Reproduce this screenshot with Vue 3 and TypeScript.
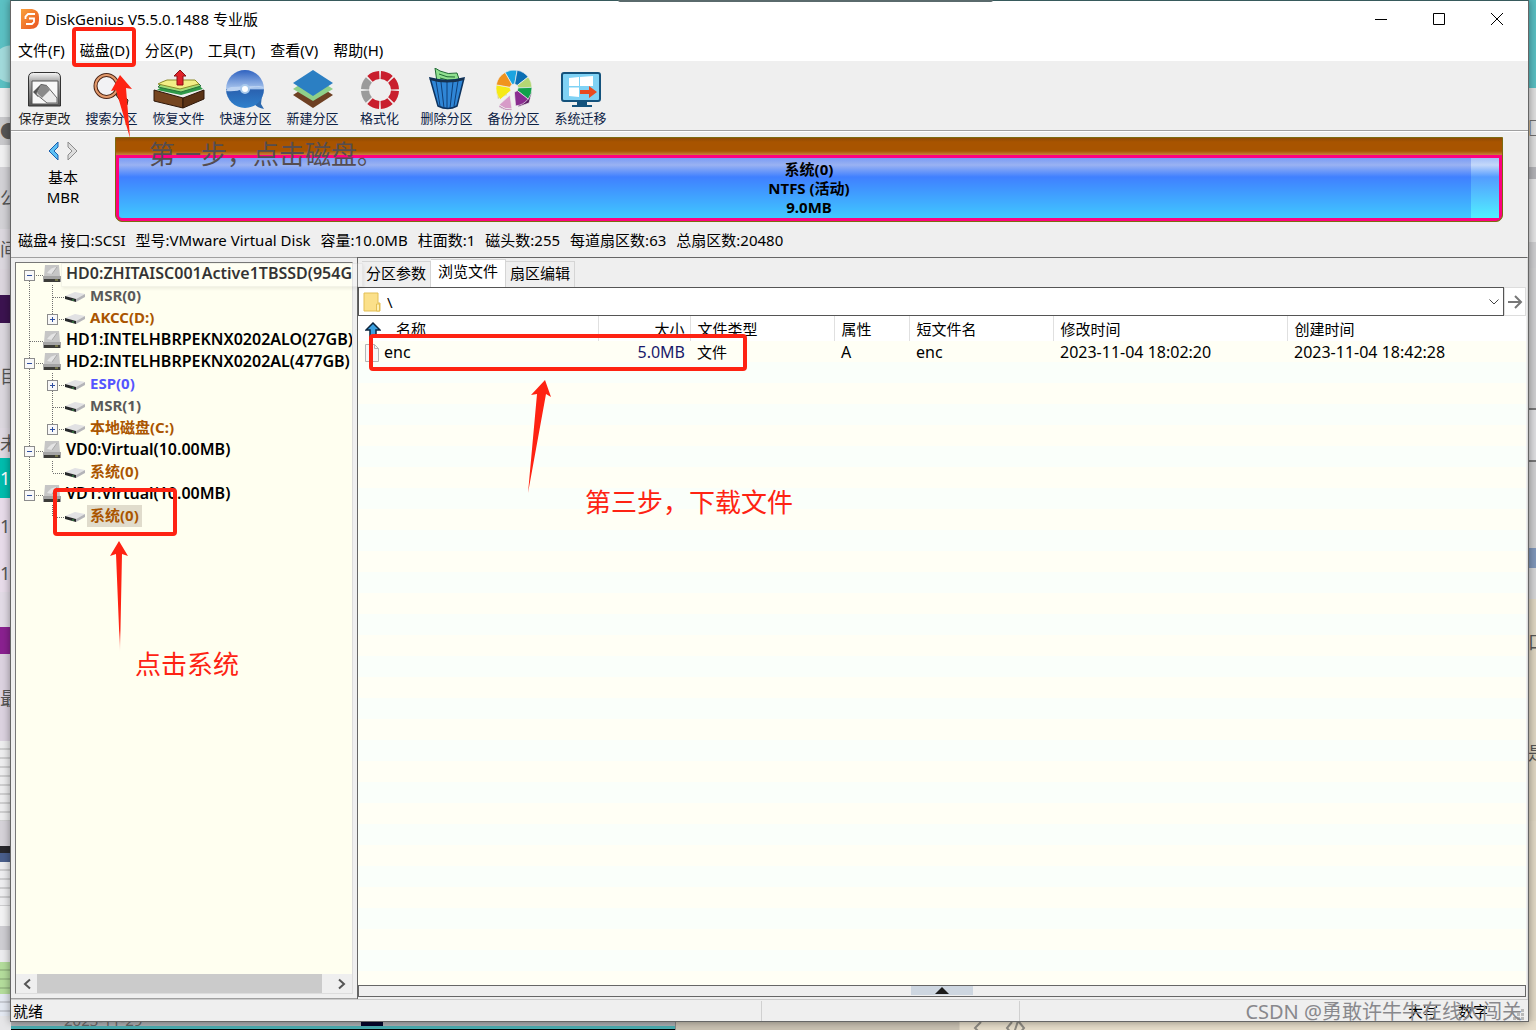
<script setup lang="ts">
import { ref } from 'vue'

interface TreeRow {
  label: string
  level: 0 | 1
  tone: 'disk' | 'grey' | 'brown' | 'blue'
  box?: 'plus' | 'minus'
  trunk: boolean
  lastChild?: boolean
  firstDisk?: boolean
  selected?: boolean
}

const menus = ['文件(F)', '磁盘(D)', '分区(P)', '工具(T)', '查看(V)', '帮助(H)']
const tools = ['保存更改', '搜索分区', '恢复文件', '快速分区', '新建分区', '格式化', '删除分区', '备份分区', '系统迁移']
const facts = ['磁盘4 接口:SCSI', '型号:VMware Virtual Disk', '容量:10.0MB', '柱面数:1', '磁头数:255', '每道扇区数:63', '总扇区数:20480']
const tabs = ['分区参数', '浏览文件', '扇区编辑']
const activeTab = ref('浏览文件')
const path = ref('\\')

const tree: TreeRow[] = [
  { label: 'HD0:ZHITAISC001Active1TBSSD(954GB)', level: 0, tone: 'disk', box: 'minus', trunk: true, firstDisk: true },
  { label: 'MSR(0)', level: 1, tone: 'grey', trunk: true },
  { label: 'AKCC(D:)', level: 1, tone: 'brown', box: 'plus', trunk: true, lastChild: true },
  { label: 'HD1:INTELHBRPEKNX0202ALO(27GB)', level: 0, tone: 'disk', trunk: true },
  { label: 'HD2:INTELHBRPEKNX0202AL(477GB)', level: 0, tone: 'disk', box: 'minus', trunk: true },
  { label: 'ESP(0)', level: 1, tone: 'blue', box: 'plus', trunk: true },
  { label: 'MSR(1)', level: 1, tone: 'grey', trunk: true },
  { label: '本地磁盘(C:)', level: 1, tone: 'brown', box: 'plus', trunk: true, lastChild: true },
  { label: 'VD0:Virtual(10.00MB)', level: 0, tone: 'disk', box: 'minus', trunk: true },
  { label: '系统(0)', level: 1, tone: 'brown', trunk: true, lastChild: true },
  { label: 'VD1:Virtual(10.00MB)', level: 0, tone: 'disk', box: 'minus', trunk: false },
  { label: '系统(0)', level: 1, tone: 'brown', trunk: false, lastChild: true, selected: true },
]

// Slices of the pages showing behind the window
const leftSlices = [
  { h: 88, c: '#5cc1c4', bubble: true }, { h: 29, c: '#efeff0' }, { h: 28, c: '#c9c9cc', t: '●' }, { h: 22, c: '#f1f1f2' },
  { h: 62, c: '#d3d2d6', t: '公' }, { h: 40, c: '#dcd8df', t: '间' }, { h: 26, c: '#dcd6de' }, { h: 28, c: '#3c1350' },
  { h: 105, c: '#dcd8df', t: '目' }, { h: 30, c: '#dfd9e2', t: '未' }, { h: 40, c: '#00bdae', t: '1', light: true },
  { h: 56, c: '#e8dcea', t: '1' }, { h: 38, c: '#e8dcea', t: '1' }, { h: 35, c: '#e2dbe6' }, { h: 27, c: '#8a2190' },
  { h: 87, c: '#dcd3e0', t: '最' }, { h: 80, c: '#eeeeef', lines: true }, { h: 25, c: '#d6d3d9' }, { h: 7, c: '#28282c' },
  { h: 9, c: '#4a5f8c' }, { h: 44, c: '#eeeef0', lines: true }, { h: 20, c: '#f3f3f4' }, { h: 24, c: '#cfced3' },
  { h: 12, c: '#ededef' }, { h: 32, c: '#b4dd9c', lines: true }, { h: 22, c: '#e4e9f2', lines: true }, { h: 14, c: '#e6e6e8' },
]
const rightSlices = [
  { h: 88, c: '#58bcc0' }, { h: 79, c: '#dedede', t: '□' }, { h: 12, c: '#b2b2b6' }, { h: 63, c: '#e3e3e4' },
  { h: 26, c: '#cdcdcf' }, { h: 140, c: '#cfcfd0' }, { h: 2, c: '#777' }, { h: 50, c: '#dedee0' },
  { h: 2, c: '#777' }, { h: 86, c: '#cfcfd0' }, { h: 20, c: '#7e95b8' }, { h: 31, c: '#d4d4d5' },
  { h: 86, c: '#ded5c1', t: '口' }, { h: 136, c: '#ded5c1', t: '是' }, { h: 209, c: '#e0d7c4' },
]

function wedge(a0: number, a1: number, r0: number, r1: number): string {
  const p = (a: number, r: number) => {
    const t = (a * Math.PI) / 180
    return `${(Math.cos(t) * r).toFixed(2)} ${(Math.sin(t) * r).toFixed(2)}`
  }
  return `M${p(a0, r0)}L${p(a0, r1)}A${r1} ${r1} 0 0 1 ${p(a1, r1)}L${p(a1, r0)}A${r0} ${r0} 0 0 0 ${p(a0, r0)}Z`
}
const wheel = [
  { a: -120, b: -80, c: '#1ba4e0' }, { a: -80, b: -38, c: '#0b6fb4' }, { a: -38, b: -2, c: '#b4d774' },
  { a: -2, b: 38, c: '#12a14b' }, { a: 38, b: 85, c: '#8a2c90' }, { a: 140, b: 190, c: '#f6ea16' }, { a: 190, b: 240, c: '#f0931e' },
]
</script>

<template>
  <div class="screen">
    <div class="desktop" aria-hidden="true">
      <div class="strip left">
        <div v-for="(s, i) in leftSlices" :key="i" :class="{ lines: s.lines, light: s.light, bubble: s.bubble }" :style="{ flexBasis: s.h + 'px', backgroundColor: s.c }">{{ s.t }}</div>
      </div>
      <div class="strip right">
        <div v-for="(s, i) in rightSlices" :key="i" :style="{ flexBasis: s.h + 'px', backgroundColor: s.c }">{{ s.t }}</div>
      </div>
      <div class="floor">
        <div class="floor-teal"><span>2023-11-29</span><i></i></div>
        <div class="floor-beige">
          <svg width="60" height="12" viewBox="0 0 60 12" fill="none" stroke="#8d8a82" stroke-width="2"><path d="M9 1 3 7l6 6M40 1l-5 6 5 6M47 1l5 6-5 6M46 0l-4 12" /></svg>
        </div>
      </div>
    </div>

    <main class="window">
      <header class="titlebar">
        <svg class="logo" width="18" height="20" viewBox="0 0 18 20">
          <defs><linearGradient id="lg" x1="0" y1="0" x2="1" y2="1"><stop offset="0" stop-color="#f9a13c" /><stop offset="1" stop-color="#e9501f" /></linearGradient></defs>
          <path d="M0 0h11q7 1 7 8v3q0 9-9 9H0z" fill="url(#lg)" />
          <path d="M14 5H7L4.500 7.500V10M8 9.500h5V13l-2 2H5" fill="none" stroke="#fff" stroke-width="1.800" />
        </svg>
        <h1>DiskGenius V5.5.0.1488 专业版</h1>
        <div class="controls">
          <button aria-label="最小化"><svg width="14" height="14"><path d="M1 7.500h12" /></svg></button>
          <button aria-label="最大化"><svg width="14" height="14"><path d="M1.500 1.500h11v11h-11z" /></svg></button>
          <button aria-label="关闭"><svg width="14" height="14"><path d="M1 1l12 12M13 1 1 13" /></svg></button>
        </div>
      </header>

      <nav class="menubar">
        <button v-for="m in menus" :key="m">{{ m }}</button>
      </nav>

      <div class="toolbar">
        <button v-for="(t, i) in tools" :key="t">
          <svg width="52" height="42" viewBox="0 0 52 42">
            <g v-if="i === 0">
              <defs><linearGradient id="sv" x1="0" y1="0" x2="0" y2="1"><stop offset="0" stop-color="#fafafa" /><stop offset=".25" stop-color="#aaa" /><stop offset="1" stop-color="#555" /></linearGradient></defs>
              <path d="M9.500 38V10q0-5.500 5-5.500h22q5 0 5 5.500v28z" fill="url(#sv)" stroke="#333" />
              <path d="M13 13h26v23H13z" fill="#f8f8f8" stroke="#555" />
              <path d="M14 24l8-8 6 1-9 12z" fill="#555" /><path d="M22 17l6 1 10 12v5H28L17 26z" fill="#ececec" stroke="#666" /><path d="M22 17l6 1 3 4-8 8-5-5z" fill="#8a8a8a" />
            </g>
            <g v-else-if="i === 1">
              <circle cx="20.500" cy="18" r="11" fill="#f2f2f4" stroke="#4b2415" stroke-width="4" />
              <circle cx="20.500" cy="18" r="11" fill="none" stroke="#e39a6c" stroke-width="2" />
              <path d="M30 27l4-3 8 8-1 5-3 1z" fill="#a9684a" stroke="#4b2415" />
              <path d="M32 30l5-3M35 33l5-3" stroke="#4b2415" />
            </g>
            <g v-else-if="i === 2">
              <path d="M1 22l29 8v10L1 33z" fill="#75451f" stroke="#2d1709" /><path d="M30 30l21-8v9l-21 9z" fill="#5a3316" stroke="#2d1709" />
              <path d="M7 20l6-4h31l6 5-22 6-24-5z" fill="#2f9a48" /><path d="M7 17l5-3h32l4 4-20 6-23-5z" fill="#9fdc77" stroke="#26733a" />
              <path d="M9 14l5-2h28l4 4-19 5-22-5z" fill="#f2ef86" stroke="#8d8b2a" />
              <path d="M27 2l6 6h-3v9h-6V8h-3z" fill="#e0222a" stroke="#8a1015" />
            </g>
            <g v-else-if="i === 3">
              <defs><linearGradient id="cd" x1="0" y1="0" x2="0" y2="1"><stop offset="0" stop-color="#2f62c0" /><stop offset=".5" stop-color="#a9c6ee" /><stop offset=".52" stop-color="#2a62b0" /><stop offset="1" stop-color="#2f80cc" /></linearGradient></defs>
              <path d="M32 33l10-6-1 9 3 5q-8-1-12-8z" fill="#2c69ae" /><circle cx="25" cy="21" r="19" fill="url(#cd)" />
              <path d="M6 23q10 1 17-2h4q10-3 17-1-1-2-5-2l-28 1q-4 1-5 4z" fill="#bcd3f2" /><circle cx="25" cy="21" r="4" fill="#fff" stroke="#a8c9ec" stroke-width="2" />
            </g>
            <g v-else-if="i === 4">
              <path d="M26 14l20 13-20 13L6 27z" fill="#6e4023" /><path d="M26 8l20 13-20 12L6 21z" fill="#8fd08a" />
              <path d="M26 2l20 13-20 13L6 15z" fill="#2b7fc3" />
            </g>
            <g v-else-if="i === 5" fill="none" stroke-width="8">
              <circle cx="26" cy="22" r="15" stroke="#c91f2e" pathLength="8" stroke-dasharray=".87 .13" transform="rotate(3 26 22)" />
              <path d="M15.400 32.600A15 15 0 0 1 15.400 11.400" stroke="#efefef" stroke-width="9" />
              <circle cx="26" cy="22" r="15" stroke="#9b9b9b" pathLength="8" stroke-dasharray=".87 .13 .87 6.130" transform="rotate(138 26 22)" />
            </g>
            <g v-else-if="i === 6">
              <path d="M14 0l5 3q8 4 17 2l3 9H16z" fill="#8fe08f" stroke="#1f6a33" /><path d="M18 6q8 4 16 3M19 10q8 3 14 2" fill="none" stroke="#1f6a33" />
              <path d="M9 10q17 5 34 0l-7 28q-9 5-19 0z" fill="#2f86d6" stroke="#0d335f" stroke-width="1.500" />
              <path d="M15 13l4 25M20 14l3 26M26 14v26M32 14l-3 26M37 13l-4 25" stroke="#0f3f78" /><path d="M9 11q17 5 34 0" stroke="#16314f" stroke-width="2" fill="none" />
            </g>
            <g v-else-if="i === 7">
              <g transform="translate(26 20)" stroke="#efefef" stroke-width=".7">
                <path d="M4 8L4 19 15 15 18 4z" fill="#5b1b63" /><path d="M-18 3l2 8 9-4v-6z" fill="#b7a90f" />
                <path v-for="w in wheel" :key="w.c" :d="wedge(w.a, w.b, 4, 18)" :fill="w.c" />
                <path d="M-4 7l-11 10q6 5 13 4z" fill="#d79bc8" /><path d="M-15 17q6 5 13 4v2q-7 0-13-4z" fill="#b879ab" />
              </g>
            </g>
            <g v-else>
              <rect x="7" y="5" width="38" height="28" rx="2" fill="#7fd2f5" stroke="#14527c" stroke-width="2" />
              <path d="M14 10l10-1v9H14zM25 9l13-1v10H25zM14 19.500h10V29l-10-1z" fill="#fff" />
              <path d="M25 22h9v-4l8 6-8 6v-4h-9z" fill="#ea4a1f" /><path d="M22 34h10v3h5v2H17v-2h5z" fill="#14527c" />
            </g>
          </svg>
          <span>{{ t }}</span>
        </button>
      </div>

      <section class="diskmap">
        <div class="scheme">
          <div class="arrows">
            <button aria-label="上一磁盘"><svg width="14" height="22"><path d="M11 2v5l-4 4 4 4v5L2 11z" fill="#5cc0f5" stroke="#1b5fae" /></svg></button>
            <button aria-label="下一磁盘"><svg width="14" height="22"><path d="M3 2v5l4 4-4 4v5l9-9z" fill="#ddd" stroke="#8c8c8c" /></svg></button>
          </div>
          <span>基本</span>
          <span>MBR</span>
        </div>
        <div class="bar">
          <div class="bar-top"></div>
          <div class="partition">
            <strong>系统(0)</strong><strong>NTFS (活动)</strong><strong>9.0MB</strong>
            <i></i>
          </div>
        </div>
      </section>
      <p class="info"><span v-for="f in facts" :key="f">{{ f }}</span></p>

      <div class="body">
        <aside class="side">
          <div class="treebox">
            <ul>
              <li v-for="(r, i) in tree" :key="i">
                <component :is="r.box ? 'button' : 'span'" class="gutter" :aria-label="r.box ? r.label : undefined">
                  <svg :width="r.level ? 48 : 28" height="22" shape-rendering="crispEdges" fill="none">
                    <g stroke="#707070" stroke-dasharray="1 1">
                      <path v-if="!r.firstDisk && (r.level === 0 || r.trunk)" d="M13.500 0v12" />
                      <path v-if="r.trunk" d="M13.500 12v10" />
                      <path v-if="r.level === 0" d="M14 12.500h14" />
                      <template v-else>
                        <path d="M36.500 0v12M37 12.500h11" /><path v-if="!r.lastChild" d="M36.500 12v10" />
                      </template>
                    </g>
                    <g v-if="r.box" :transform="r.level ? 'translate(31 7)' : 'translate(8 7)'">
                      <rect x=".5" y=".5" width="10" height="10" fill="#f8f8f8" stroke="#8c8c8c" />
                      <path d="M3 5.500h5" stroke="#2f4f9f" /><path v-if="r.box === 'plus'" d="M5.500 3v5" stroke="#2f4f9f" />
                    </g>
                  </svg>
                </component>
                <svg v-if="r.level === 0" class="disk-icon" width="18" height="18">
                  <path d="M2 0h14l1 11H1z" fill="#c6c6c6" /><path d="M4 8q4-6 10-6l-5 7z" fill="#e4e4e4" /><path d="M9 9l5-7" stroke="#aaa" />
                  <path d="M0 11h18v6H0z" fill="#a4a4a4" /><path d="M1 14h16v3H1z" fill="#3c3c38" /><path d="M12 15h3" stroke="#a9a95a" />
                </svg>
                <svg v-else class="part-icon" width="20" height="12">
                  <path d="M0 5l10-4 10 2-9 5z" fill="#e2e2e4" /><path d="M11 8l9-5v3l-9 5z" fill="#b4b4b8" /><path d="M0 5l11 3v3L0 8z" fill="#26282a" /><path d="M7 9h2" stroke="#3ca04c" />
                </svg>
                <span class="label" :class="[r.tone, { selected: r.selected }]">{{ r.label }}</span>
              </li>
            </ul>
            <div class="hscroll">
              <button aria-label="向左滚动"><svg width="8" height="12"><path d="M7 1.500 2 6l5 4.500" /></svg></button>
              <div class="track"><div class="thumb"></div></div>
              <button aria-label="向右滚动"><svg width="8" height="12"><path d="M1 1.500 6 6l-5 4.500" /></svg></button>
            </div>
          </div>
          <div class="tip"></div>
        </aside>

        <section class="files">
          <div class="tabs" role="tablist">
            <button v-for="t in tabs" :key="t" role="tab" :aria-selected="activeTab === t" :class="{ active: activeTab === t }" @click="activeTab = t">{{ t }}</button>
          </div>
          <div class="pathrow">
            <div class="path">
              <svg width="18" height="20"><path d="M1 1h14v10h2v8H1z" fill="#fbe08a" stroke="#e3bf55" /><path d="M13.500 19v-7h3v7z" fill="#fff0b5" stroke="#e3bf55" /></svg>
              <input v-model="path" aria-label="路径" />
              <button aria-label="展开路径"><svg width="12" height="8"><path d="M1.500 1.500 6 6l4.500-4.500" fill="none" stroke="#444" /></svg></button>
            </div>
            <button class="go" aria-label="转到"><svg width="16" height="16"><path d="M1 8h13M8 2l6 6-6 6" fill="none" stroke="#777" stroke-width="2" /></svg></button>
          </div>
          <div class="list">
            <table>
              <colgroup><col class="c-name" /><col class="c-size" /><col class="c-type" /><col class="c-attr" /><col class="c-short" /><col class="c-date" /><col /></colgroup>
              <thead>
                <tr>
                  <th class="name"><svg width="16" height="16"><path d="M8 1l7 7h-4v7H5V8H1z" fill="#3ba0e0" stroke="#0a2540" stroke-width="1.500" /></svg>名称</th>
                  <th class="num">大小</th><th>文件类型</th><th>属性</th><th>短文件名</th><th>修改时间</th><th>创建时间</th>
                </tr>
              </thead>
              <tbody>
                <tr>
                  <td class="name file"><svg width="14" height="18"><path d="M.5.5h9l4 4v13H.5z" fill="#f7f7f7" stroke="#b5b5b5" /><path d="M9.500.5v4h4" fill="none" stroke="#b5b5b5" /></svg>enc</td>
                  <td class="num size">5.0MB</td><td>文件</td><td class="latin">A</td><td class="latin">enc</td><td class="latin">2023-11-04 18:02:20</td><td class="latin">2023-11-04 18:42:28</td>
                </tr>
              </tbody>
            </table>
          </div>
          <div class="splitter"><button aria-label="展开面板"><svg width="14" height="7"><path d="M0 7l7-7 7 7z" fill="#1c1c1c" /></svg></button></div>
        </section>
      </div>

      <footer class="status">
        <span class="ready">就绪</span><span class="cell mid"></span><span class="cell caps">大写</span><span class="num-lock">数字</span>
        <svg width="12" height="12" fill="#b9b9b9"><path d="M8 0h3v3H8zM8 4h3v3H8zM4 4h3v3H4zM8 8h3v3H8zM4 8h3v3H4zM0 8h3v3H0z" /></svg>
      </footer>
      <div class="watermark">CSDN @勇敢许牛牛在线大闯关</div>
    </main>

    <div class="frame f-menu"></div>
    <div class="frame f-tree"></div>
    <div class="frame f-file"></div>
    <svg class="pointer p-menu" width="28" height="66" viewBox="0 0 28 66"><path d="M10 0l12 14-6-1 4 50L6 15l-5 1z" /></svg>
    <svg class="pointer p-tree" width="20" height="114" viewBox="0 0 20 114"><defs><linearGradient id="fade" x1="0" y1="0" x2="0" y2="1"><stop offset=".8" stop-color="#fe2313" /><stop offset="1" stop-color="#fe2313" stop-opacity="0" /></linearGradient></defs><path d="M10 0l9 15-6-2-2 99L7 13l-6 2z" fill="url(#fade)" /></svg>
    <svg class="pointer p-file" width="26" height="114" viewBox="0 0 26 114"><path d="M19 0l6 17-5-3L2 113l9-99-6 1z" /></svg>
    <div class="note n-menu">第一步，点击磁盘。</div>
    <div class="note n-tree">点击系统</div>
    <div class="note n-file">第三步，下载文件</div>
  </div>
</template>

<style>
body { margin: 0; }
</style>

<style scoped>
* { box-sizing: border-box; }
.screen { position: relative; min-height: 100vh; overflow: hidden; display: flex; padding: 0 7px 8px 10px; font: 15px/20px "Noto Sans", "Noto Sans CJK SC", sans-serif; color: #000; }
button { padding: 0; border: 0; background: none; font: inherit; color: inherit; }
svg { display: block; flex: none; }

.desktop { position: absolute; inset: 0; background: #c6c6c8; }
.strip { position: absolute; top: 0; bottom: 0; width: 11px; display: flex; flex-direction: column; }
.strip.left { left: 0; }
.strip.right { right: 0; width: 8px; }
.strip > div { flex: none; overflow: hidden; display: flex; align-items: center; white-space: nowrap; color: #555; font-size: 18px; line-height: 20px; }
.strip > .light { color: #fff; }
.strip > .lines { background-image: repeating-linear-gradient(#0000 0 7px, #0002 7px 9px); }
.strip > .bubble { background-image: radial-gradient(circle at 11px 64px, #a2dadb 18px, #0000 19px); }
.floor { position: absolute; left: 11px; right: 0; bottom: 0; height: 9px; display: flex; }
.floor-teal { position: relative; width: 665px; overflow: hidden; background: linear-gradient(#aeb0b4 5px, #49aeb1 5px 8px, #000 8px); border-right: 1px solid #888; }
.floor-teal span { position: absolute; left: 53px; bottom: 0; color: #666; }
.floor-teal i { position: absolute; left: 350px; top: 0; width: 22px; height: 5px; background: #06062c; }
.floor-beige { flex: 1; padding-left: 296px; overflow: hidden; background: linear-gradient(90deg, #c9c1b2 283px, #e6ddca 284px); }

.window { position: relative; flex: 1; min-width: 0; display: flex; flex-direction: column; background: #efefef; border: 1px solid #666; border-top-color: #375a5c; box-shadow: 0 0 8px #0006; }
.window::before { content: ""; position: absolute; left: 40%; top: -1px; width: 375px; height: 2px; background: #5a6a6c; border-radius: 0 0 2px 2px; }
.titlebar { display: flex; align-items: center; height: 36px; padding-left: 10px; background: #fff; }
h1 { flex: 1; margin: 0 0 0 6px; font-size: 15px; line-height: 20px; font-weight: 400; }
.controls { display: flex; padding-right: 2px; }
.controls button { display: flex; justify-content: center; width: 58px; }
.controls path { fill: none; stroke: #000; }
.menubar { display: flex; height: 24px; padding-left: 7px; gap: 15px; background: #fff; line-height: 26px; }
.menubar button { white-space: nowrap; }
.toolbar { display: flex; height: 70px; padding-top: 7px; border-bottom: 1px solid #a0a0a0; }
.toolbar button { width: 67px; display: flex; flex-direction: column; align-items: center; font-size: 13px; line-height: 16px; color: #0c2144; }
.toolbar button:first-child { color: #222; }
.diskmap { display: flex; padding: 5px 25px 0 0; border-top: 1px solid #fff; }
.scheme { width: 104px; display: flex; flex-direction: column; align-items: center; padding-top: 3px; }
.arrows { display: flex; gap: 4px; margin-bottom: 5px; }
.bar { flex: 1; height: 85px; border: 1px solid #7d6a10; border-radius: 0 0 7px 7px; background: #7d6a10; overflow: hidden; }
.bar-top { height: 17px; background: linear-gradient(#8e4a05, #a85400 4px, #a85400 13px, #c8803c); }
.partition { position: relative; height: 66px; display: flex; flex-direction: column; align-items: center; padding-top: 2px; border: 3px solid #ff007f; border-radius: 0 0 6px 6px; background: linear-gradient(#7a9cf4, #9ab2f2 7px, #4080ff 19px, #40c8ff); font-size: 15px; line-height: 19px; }
.partition i { position: absolute; right: 0; top: 0; bottom: 0; width: 28px; background: linear-gradient(#a4c0f8, #c4d8fa 7px, #549cff 19px, #50f0ff); }
.info { display: flex; gap: 10px; margin: 0; height: 35px; padding: 8px 0 0 7px; white-space: nowrap; }

.body { flex: 1; display: flex; min-height: 0; }
.side { position: relative; flex: none; width: 346px; padding: 4px; border-top: 1px solid #a0a0a0; border-bottom: 1px solid #a0a0a0; }
.treebox { height: 100%; display: flex; flex-direction: column; background: #fffff0; border: 1px solid #777; border-right-color: #ddd; border-bottom-color: #ddd; overflow: hidden; }
ul { flex: 1; margin: 0; padding: 0; list-style: none; }
li { display: flex; height: 22px; }
.gutter { flex: none; }
.disk-icon { margin: 2px 0 0 -1px; }
.part-icon { margin: 6px 0 0 1px; }
.label { padding: 0 3px; margin-left: 2px; font-weight: 700; line-height: 20px; white-space: nowrap; }
.disk { font-size: 16px; font-weight: 600; }
.grey { color: #5a5a5a; }
.brown { color: #aa5500; }
.blue { color: #5555ff; }
.selected { background: #e0dccc; }
.hscroll { display: flex; height: 19px; background: #efefef; }
.hscroll button { width: 21px; display: flex; align-items: center; justify-content: center; }
.hscroll path { fill: none; stroke: #555; stroke-width: 2; }
.track { flex: 1; }
.thumb { width: 97%; height: 100%; background: #cbcbcb; }
.tip { position: absolute; left: 50px; right: -6px; top: 5px; height: 24px; background: #ffffff33; border: 1px solid #0000000c; box-shadow: 1px 2px 3px #0001; }

.files { flex: 1; min-width: 0; display: flex; flex-direction: column; padding: 1px 1px 2px 0; border-top: 1px solid #666; border-left: 1px solid #666; border-right: 1px solid #ddd; }
.tabs { display: flex; align-items: flex-end; height: 28px; padding-left: 4px; }
.tabs button { height: 26px; width: 69px; padding-bottom: 3px; border: solid #d5d5d5; border-width: 1px 1px 0 0; white-space: nowrap; }
.tabs button.active { height: 28px; width: 75px; background: #fff; padding-bottom: 5px; }
.pathrow { display: flex; height: 29px; }
.path { flex: 1; display: flex; align-items: center; padding-left: 4px; background: #fff; border: 1px solid #555; }
.path input { flex: 1; min-width: 0; padding: 0 6px; border: 0; outline: 0; background: none; font: inherit; }
.path button { padding: 4px 3px; }
.go { width: 22px; display: flex; align-items: center; justify-content: center; background: #fff; border: 1px solid #ddd; }
.list { flex: 1; background: linear-gradient(#fff 25px, #0000 25px), repeating-linear-gradient(#fffff5 0 21px, #fafffa 21px 42px) 0 25px; }
table { width: 100%; table-layout: fixed; border-collapse: collapse; }
.c-name { width: 240px; }
.c-size { width: 92px; }
.c-type { width: 144px; }
.c-attr { width: 75px; }
.c-short { width: 144px; }
.c-date { width: 234px; }
th, td { padding: 0 0 0 7px; text-align: left; font-weight: 400; white-space: nowrap; }
th { height: 25px; border-right: 1px solid #e0e0e0; }
th:last-child { border-right: 0; }
td { height: 21px; }
.latin, .size, .file { font-size: 16px; }
.num { text-align: right; padding-right: 5px; }
.size { color: #1a1a6a; }
.name svg { display: inline-block; vertical-align: -3px; margin-right: 15px; }
.name.file svg { margin-right: 5px; vertical-align: -4px; }
.splitter { height: 12px; border: 1px solid #666; display: flex; justify-content: center; }
.splitter button { width: 62px; height: 9px; display: flex; align-items: center; justify-content: center; background: #cdd6e0; }

.status { display: flex; height: 22px; padding: 1px 3px 0 2px; border-top: 1px solid #ccc; }
.ready { flex: 1; border-right: 1px solid #d0d0d0; }
.mid { width: 258px; border-right: 1px solid #d0d0d0; }
.cell.caps { width: 438px; padding-left: 388px; }
.num-lock { width: 55px; }
.status svg { align-self: flex-end; }
.watermark { position: absolute; right: 6px; bottom: -3px; font-size: 20px; line-height: 24px; color: #88888c; }

.frame { position: absolute; border: 4px solid #fe2313; border-radius: 4px; }
.f-menu { left: 72px; top: 27px; width: 64px; height: 40px; }
.f-tree { left: 53px; top: 488px; width: 124px; height: 48px; }
.f-file { left: 369px; top: 334px; width: 378px; height: 37px; }
.pointer { position: absolute; fill: #fe2313; }
.p-menu { left: 110px; top: 75px; }
.p-tree { left: 109px; top: 541px; }
.p-file { left: 526px; top: 380px; }
.note { position: absolute; font: 26px/32px "Noto Sans CJK SC", sans-serif; color: #fe2313; white-space: nowrap; }
.n-menu { left: 149px; top: 137px; color: #554d50; }
.n-tree { left: 135px; top: 647px; }
.n-file { left: 585px; top: 485px; }
</style>
